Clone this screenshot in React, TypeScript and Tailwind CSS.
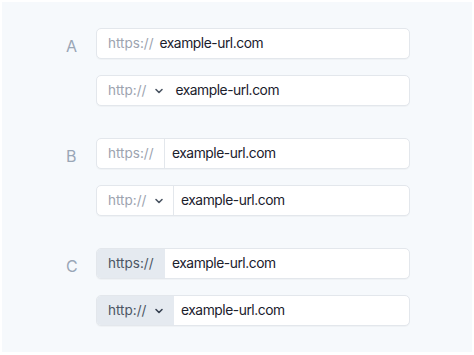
import React from "react";

const Chevron = ({ cls }: { cls: string }) => (
  <svg width="10" height="10" viewBox="0 0 10 10" className={cls} fill="none">
    <path d="M2 3.5 L5 6.5 L8 3.5" stroke="currentColor" strokeWidth="1.6" strokeLinecap="round" strokeLinejoin="round" />
  </svg>
);

const box = "flex h-[31px] w-[314px] items-center rounded-[5px] border border-[#e3e7ec] bg-white shadow-[0_1px_1px_rgba(15,23,42,0.03)] overflow-hidden";
const main = "text-[#1a202c] tracking-[-0.45px] text-[13.8px]";

export default function App() {
  return (
    <div className="h-[355px] w-[474px] bg-white p-[2px]" style={{ fontFamily: "Inter, 'Noto Sans', sans-serif" }}>
      <div className="flex h-[350px] w-[470px] flex-col gap-[32px] bg-[#f6f9fc] pl-[64px] pt-[26px] text-[13.5px]">
        {/* A */}
        <div className="flex gap-[20px]">
          <div className="w-[10px] pt-[6px] text-[16px] text-[#9aa6b6]">A</div>
          <div className="flex flex-col gap-[16px]">
            <div className={box}>
              <span className="pl-[11px] text-[#9ca3af]">https://</span>
              <span className={"pl-[6px] " + main}>example-url.com</span>
            </div>
            <div className={box}>
              <span className="pl-[11px] text-[#9ca3af]">http://</span>
              <Chevron cls="ml-[8px] text-[#4b5563]" />
              <span className={"pl-[11px] " + main}>example-url.com</span>
            </div>
          </div>
        </div>
        {/* B */}
        <div className="flex gap-[20px]">
          <div className="w-[10px] pt-[6px] text-[16px] text-[#9aa6b6]">B</div>
          <div className="flex flex-col gap-[16px]">
            <div className={box}>
              <span className="flex h-full w-[68px] items-center border-r border-[#e3e7ec] pl-[11px] text-[#9ca3af]">https://</span>
              <span className={"pl-[7px] " + main}>example-url.com</span>
            </div>
            <div className={box}>
              <span className="flex h-full w-[77px] items-center border-r border-[#e3e7ec] pl-[11px] text-[#9ca3af]">
                http://
                <Chevron cls="ml-[8px] text-[#4b5563]" />
              </span>
              <span className={"pl-[7px] " + main}>example-url.com</span>
            </div>
          </div>
        </div>
        {/* C */}
        <div className="flex gap-[20px]">
          <div className="w-[10px] pt-[6px] text-[16px] text-[#9aa6b6]">C</div>
          <div className="flex flex-col gap-[16px]">
            <div className={box}>
              <span className="flex h-full w-[68px] items-center bg-[#e5eaf0] pl-[11px] text-[#4b5563]">https://</span>
              <span className={"pl-[7px] " + main}>example-url.com</span>
            </div>
            <div className={box}>
              <span className="flex h-full w-[77px] items-center bg-[#e5eaf0] pl-[11px] text-[#4b5563]">
                http://
                <Chevron cls="ml-[8px] text-[#374151]" />
              </span>
              <span className={"pl-[7px] " + main}>example-url.com</span>
            </div>
          </div>
        </div>
      </div>
    </div>
  );
}
